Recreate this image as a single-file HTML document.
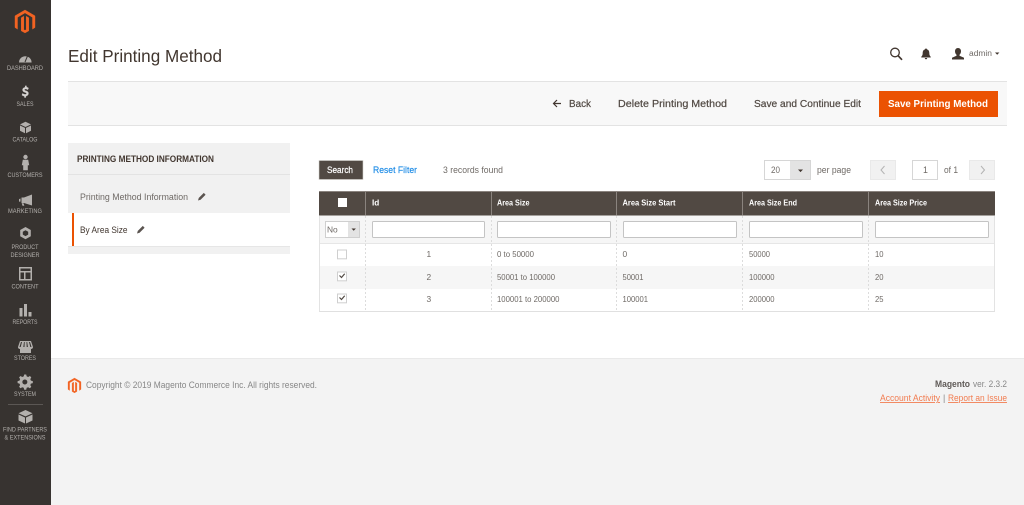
<!DOCTYPE html>
<html><head><meta charset="utf-8"><title>Edit Printing Method</title>
<style>
html,body{margin:0;padding:0;background:#fff;width:1024px;height:505px;overflow:hidden}
svg{display:block;filter:blur(.3px)}
text{font-family:"Liberation Sans",Arial,sans-serif}
.n text{font-size:6.2px;fill:#b3b0ad;text-anchor:middle}
.i{fill:#b3b0ad}
.r text{font-size:8.400px;fill:#6f6a66}
.h text{font-size:8.200px;fill:#fff;font-weight:bold}
.a text{font-size:10px;fill:#514943;stroke:#514943;stroke-width:.2}
.b{fill:#fff;stroke:#c4c4c4}
</style></head><body>
<svg width="1024" height="505" viewBox="0 0 1024 505" xmlns="http://www.w3.org/2000/svg">
<rect width="1024" height="505" fill="#fff"/>
<rect x="51" y="358" width="973" height="147" fill="#f3f3f3"/>
<rect x="51" y="358" width="973" height="1" fill="#e9e9e9"/>
<rect width="51" height="505" fill="#373330"/>

<!-- logo -->
<g transform="translate(15 10) scale(.8333)" fill="#f26322" stroke="#f26322" stroke-width=".5">
<path d="M12 0L24 7V21L21 23V8.800L12 3.500L3 8.800V23L0 21V7Z"/>
<path d="M10.500 7.500V23.500L12 24.500L13.500 23.500V7.500L16.500 9.300V25L12 27.500L7.500 25V9.300Z"/>
</g>

<!-- nav icons -->
<g class="i">
<path d="M19 62.500a6.300 6.300 0 1 1 12.600 0z"/><path d="M25 62l2.500-6" stroke="#373330" stroke-width="1"/>
<g transform="translate(25.500 92) scale(.68) translate(-25.500 -94)"><path d="M25.100 85v2.200c-2.400.3-3.900 1.700-3.900 3.600 0 4.300 5.900 3.100 5.900 5.300 0 1-1 1.500-2.200 1.500-1.400 0-2.600-.6-3.600-1.500l-1 2.500c1 .8 2.200 1.300 3.700 1.500v2h1.900v-2c2.500-.4 3.900-2 3.900-4 0-4.500-5.900-3.300-5.900-5.300 0-.9.800-1.300 1.900-1.300 1.100 0 2.200.4 3.100 1.100l1-2.400c-.9-.6-1.900-1-3-1.200V85z" fill="#d6d4d2" stroke="#d6d4d2" stroke-width=".6"/></g>
<path d="M25.500 121.800l5.500 2.600-5.500 2.600-5.500-2.600zM20 125.500l5 2.400v5.400l-5-2.500zM31 125.500l-5 2.400v5.400l5-2.500z"/>
<circle cx="25.500" cy="157" r="2.200"/><path d="M22.800 159.800h5.400l1 5.500h-1.400v5h-4.600v-5h-1.400z"/>
<path d="M21.500 197.500h2.500l8-3v11l-8-2.500h-2.500zM20.500 198.500v3l-1.500.3v-2.700z M23.500 203.200l.8 2.500h-1.800l-.8-2.500z"/>
<path d="M25.500 227l5.300 3v6.300l-5.300 3-5.300-3V230zM25.500 230.300l-2.700 1.500v2.800l2.700 1.500 2.700-1.500v-2.800z" fill-rule="evenodd"/>
<path d="M19 267h13v13.500H19zM20.500 268.500v2.500h10v-2.500zM20.500 272.500v6.500h3.500v-6.500zM25.500 272.500v6.500h5v-6.500z" fill-rule="evenodd"/>
<rect x="19.500" y="308" width="3" height="8.500"/><rect x="24" y="304" width="3" height="12.500"/><rect x="28.500" y="312" width="3" height="4.500"/>
<path d="M20 341h11l2 6c0 1.500-1.300 2-2 2v4H20V349c-.8 0-2-.5-2-2zM21 342l-1.500 5h1.200l1.300-5zM24 342l-.7 5h1.200l.2-5zM26.500 342l.2 5h1.200l-.7-5zM29 342l1.300 5h1.200l-1.500-5z" fill-rule="evenodd"/>
<path d="M25 374.500l1.200 0 .5 1.900 1.500.6 1.700-1 1.400 1.400-1 1.700.6 1.500 1.900.5v2l-1.900.5-.6 1.500 1 1.700-1.400 1.400-1.700-1-1.500.6-.5 1.900h-2l-.5-1.900-1.500-.6-1.700 1-1.400-1.400 1-1.700-.6-1.500-1.900-.5v-2l1.900-.5.600-1.500-1-1.700 1.400-1.400 1.700 1 1.500-.6.500-1.900zM24.800 379.500a2.500 2.500 0 1 0 .1 0z" fill-rule="evenodd"/>
<rect x="8" y="404" width="35" height="1" fill="#5b5754"/>
<path d="M25.500 410l7 3.200-7 3.200-7-3.200zM18.500 414.500l6.500 3v6l-6.500-3zM32.500 414.500l-6.500 3v6l6.500-3z"/>
</g>
<g class="n">
<text x="25" y="70" textLength="36" lengthAdjust="spacingAndGlyphs">DASHBOARD</text>
<text x="25" y="106" textLength="17" lengthAdjust="spacingAndGlyphs">SALES</text>
<text x="25" y="141.500" textLength="25" lengthAdjust="spacingAndGlyphs">CATALOG</text>
<text x="25" y="177" textLength="35" lengthAdjust="spacingAndGlyphs">CUSTOMERS</text>
<text x="25" y="213" textLength="34" lengthAdjust="spacingAndGlyphs">MARKETING</text>
<text x="25" y="249" textLength="27" lengthAdjust="spacingAndGlyphs">PRODUCT</text>
<text x="25" y="257" textLength="29" lengthAdjust="spacingAndGlyphs">DESIGNER</text>
<text x="25" y="288.500" textLength="27" lengthAdjust="spacingAndGlyphs">CONTENT</text>
<text x="25" y="324" textLength="25" lengthAdjust="spacingAndGlyphs">REPORTS</text>
<text x="25" y="360" textLength="22" lengthAdjust="spacingAndGlyphs">STORES</text>
<text x="25" y="396" textLength="22" lengthAdjust="spacingAndGlyphs">SYSTEM</text>
<text x="25" y="431.500" textLength="44" lengthAdjust="spacingAndGlyphs">FIND PARTNERS</text>
<text x="25" y="439.500" textLength="41" lengthAdjust="spacingAndGlyphs">&amp; EXTENSIONS</text>
</g>

<!-- page title -->
<text x="68" y="62" font-size="17.500" fill="#41362f" textLength="154" lengthAdjust="spacingAndGlyphs">Edit Printing Method</text>

<!-- header icons -->
<g fill="none" stroke="#41362f" stroke-width="1.300"><circle cx="895" cy="52.500" r="4.300"/><path d="M898.200 55.800L902 59.800" stroke-width="1.700"/></g>
<path d="M926 48.500c.6 0 1 .4 1 .9 1.700.5 2.300 2 2.300 3.500 0 2 .5 3 1.400 3.800v.8h-9.400v-.8c.9-.8 1.400-1.800 1.400-3.800 0-1.500.6-3 2.300-3.500 0-.5.400-.9 1-.9zM924.800 58h2.400c0 .8-.5 1.300-1.200 1.300s-1.200-.5-1.200-1.300z" fill="#41362f"/>
<path d="M958 48c2 0 3 1.500 3 3.300 0 1.600-.7 2.800-1.500 3.500v1l4.500 2V59.500h-12V57.800l4.500-2v-1c-.8-.7-1.500-1.900-1.500-3.500 0-1.800 1-3.300 3-3.300z" fill="#41362f"/>
<text x="969" y="56" font-size="8" fill="#6f6a66" textLength="23" lengthAdjust="spacingAndGlyphs">admin</text>
<path d="M995 52.500h4.400l-2.200 2.300z" fill="#41362f"/>

<!-- action bar -->
<rect x="68" y="81.500" width="939" height="44" fill="#f8f8f8"/>
<rect x="68" y="81" width="939" height="1" fill="#e3e3e3"/>
<rect x="68" y="125" width="939" height="1" fill="#e3e3e3"/>
<path d="M561 103.500h-7M557 100l-3.500 3.500 3.500 3.500" fill="none" stroke="#41362f" stroke-width="1.200"/>
<g class="a">
<text x="569" y="107" textLength="22" lengthAdjust="spacingAndGlyphs">Back</text>
<text x="618" y="107" textLength="109" lengthAdjust="spacingAndGlyphs">Delete Printing Method</text>
<text x="754" y="107" textLength="107" lengthAdjust="spacingAndGlyphs">Save and Continue Edit</text>
</g>
<rect x="879" y="91" width="119" height="26" fill="#eb5202"/>
<text x="888" y="107" font-size="10" font-weight="bold" fill="#fff" textLength="100" lengthAdjust="spacingAndGlyphs">Save Printing Method</text>

<!-- left panel -->
<rect x="68" y="143" width="222" height="111" fill="#f1f1f1"/>
<rect x="68" y="174" width="222" height="1" fill="#e3e3e3"/>
<text x="77" y="162" font-size="8.800" font-weight="bold" fill="#41362f" textLength="137" lengthAdjust="spacingAndGlyphs">PRINTING METHOD INFORMATION</text>
<text x="80" y="200" font-size="9" fill="#6f6a66" textLength="108" lengthAdjust="spacingAndGlyphs">Printing Method Information</text>
<path d="M198 200.500l.8-2.600 5-5 1.800 1.800-5 5z" fill="#5b5450"/>
<rect x="68" y="213" width="222" height="33" fill="#fff"/>
<rect x="72" y="213" width="2" height="33" fill="#eb5202"/>
<rect x="68" y="246" width="222" height="1" fill="#e6e6e6"/>
<text x="80" y="233" font-size="9" fill="#41362f" textLength="47.500" lengthAdjust="spacingAndGlyphs">By Area Size</text>
<path d="M137 233.500l.8-2.600 5-5 1.800 1.800-5 5z" fill="#5b5450"/>

<!-- grid toolbar -->
<rect x="319" y="160.500" width="44" height="19" fill="#514943" stroke="#d5d2cf" stroke-width=".6"/>
<text x="327" y="173" font-size="8.800" fill="#fff" stroke="#fff" stroke-width=".2" textLength="26" lengthAdjust="spacingAndGlyphs">Search</text>
<text x="373" y="173" font-size="8.800" fill="#1a8ae6" stroke="#1a8ae6" stroke-width=".15" textLength="44" lengthAdjust="spacingAndGlyphs">Reset Filter</text>
<text x="443" y="173" font-size="8.800" fill="#6f6a66" textLength="60" lengthAdjust="spacingAndGlyphs">3 records found</text>

<rect x="764.500" y="160.500" width="46" height="19" fill="#fff" stroke="#d6d6d6"/>
<rect x="790" y="161" width="20" height="18" fill="#e3e3e3"/>
<text x="771" y="173" font-size="8.800" fill="#6f6a66" textLength="9" lengthAdjust="spacingAndGlyphs">20</text>
<path d="M798 169.500h5l-2.500 2.600z" fill="#41362f"/>
<text x="817" y="173" font-size="8.800" fill="#6f6a66" textLength="34" lengthAdjust="spacingAndGlyphs">per page</text>
<rect x="870.500" y="160.500" width="25" height="19" fill="#f1f1f1" stroke="#e9e9e9"/>
<path d="M884.500 166l-3.500 4 3.500 4" fill="none" stroke="#b3b3b3"/>
<rect x="912.500" y="160.500" width="25" height="19" fill="#fff" stroke="#d6d6d6"/>
<text x="923" y="173" font-size="8.800" fill="#6f6a66">1</text>
<text x="944" y="173" font-size="8.800" fill="#6f6a66" textLength="14" lengthAdjust="spacingAndGlyphs">of 1</text>
<rect x="969.500" y="160.500" width="25" height="19" fill="#f1f1f1" stroke="#e9e9e9"/>
<path d="M981 166l3.500 4-3.500 4" fill="none" stroke="#b3b3b3"/>

<!-- table -->
<rect x="319" y="191" width="676" height="24.500" fill="#514943"/>
<rect x="319" y="191" width="676" height="1" fill="#8a837e"/>
<rect x="319" y="215.500" width="676" height="28" fill="#f6f6f6"/>
<rect x="319" y="266" width="676" height="23" fill="#f6f6f6"/>
<rect x="319" y="243" width="676" height="1" fill="#e6e6e6"/>
<rect x="319" y="311" width="676" height="1" fill="#e0e0e0"/>
<g stroke="#e3e3e3" fill="none">
<path d="M319.500 216V311M994.500 216V311"/>
</g>
<g stroke="#8a837e"><path d="M365.500 192V215M491.500 192V215M616.500 192V215M742.500 192V215M868.500 192V215"/></g>
<g stroke="#dcdcdc" stroke-dasharray="2 2"><path d="M365.500 216V311M491.500 216V311M616.500 216V311M742.500 216V311M868.500 216V311"/></g>

<rect x="338" y="198" width="9" height="9" fill="#fff"/>
<g class="h">
<text x="372" y="205.500">Id</text>
<text x="497" y="205.500" textLength="32.500" lengthAdjust="spacingAndGlyphs">Area Size</text>
<text x="622.500" y="205.500" textLength="53" lengthAdjust="spacingAndGlyphs">Area Size Start</text>
<text x="749" y="205.500" textLength="48" lengthAdjust="spacingAndGlyphs">Area Size End</text>
<text x="875" y="205.500" textLength="52" lengthAdjust="spacingAndGlyphs">Area Size Price</text>
</g>

<!-- filters -->
<rect x="325.500" y="221.500" width="34" height="16" fill="#fff" stroke="#cfcfcf"/>
<rect x="348" y="222" width="11" height="15" fill="#e3e3e3"/>
<path d="M351.500 228.500h4.400l-2.200 2.300z" fill="#41362f"/>
<text x="327" y="232.500" font-size="8.400" fill="#6f6a66">No</text>
<g class="b">
<rect x="372.500" y="221.500" width="112" height="16" rx="1"/>
<rect x="497.500" y="221.500" width="113" height="16" rx="1"/>
<rect x="623.500" y="221.500" width="113" height="16" rx="1"/>
<rect x="749.500" y="221.500" width="113" height="16" rx="1"/>
<rect x="875.500" y="221.500" width="113" height="16" rx="1"/>
</g>

<!-- rows -->
<g fill="#fff" stroke="#cfcfcf">
<rect x="337.500" y="250" width="9" height="8.800"/>
<rect x="337.500" y="272" width="9" height="8.800"/>
<rect x="337.500" y="294" width="9" height="8.800"/>
</g>
<g fill="none" stroke="#514943" stroke-width="1.200">
<path d="M339.500 275.500l2 2 3.200-3.800"/>
<path d="M339.500 297.500l2 2 3.200-3.800"/>
</g>
<g class="r">
<text x="426.500" y="257">1</text>
<text x="426.500" y="280">2</text>
<text x="426.500" y="302">3</text>
<text x="497" y="257" textLength="37" lengthAdjust="spacingAndGlyphs">0 to 50000</text>
<text x="497" y="280" textLength="58" lengthAdjust="spacingAndGlyphs">50001 to 100000</text>
<text x="497" y="302" textLength="62.500" lengthAdjust="spacingAndGlyphs">100001 to 200000</text>
<text x="622.500" y="257">0</text>
<text x="622.500" y="280" textLength="21" lengthAdjust="spacingAndGlyphs">50001</text>
<text x="622.500" y="302" textLength="25.500" lengthAdjust="spacingAndGlyphs">100001</text>
<text x="749" y="257" textLength="21" lengthAdjust="spacingAndGlyphs">50000</text>
<text x="749" y="280" textLength="25.500" lengthAdjust="spacingAndGlyphs">100000</text>
<text x="749" y="302" textLength="25.500" lengthAdjust="spacingAndGlyphs">200000</text>
<text x="875" y="257" textLength="8.500" lengthAdjust="spacingAndGlyphs">10</text>
<text x="875" y="280" textLength="8.500" lengthAdjust="spacingAndGlyphs">20</text>
<text x="875" y="302" textLength="8.500" lengthAdjust="spacingAndGlyphs">25</text>
</g>

<!-- footer -->
<g transform="translate(68 378) scale(.5417)" fill="#f26322" stroke="#f26322" stroke-width=".5">
<path d="M12 0L24 7V21L21 23V8.800L12 3.500L3 8.800V23L0 21V7Z"/>
<path d="M10.500 7.500V23.500L12 24.500L13.500 23.500V7.500L16.500 9.300V25L12 27.500L7.500 25V9.300Z"/>
</g>
<text x="86" y="388" font-size="8.800" fill="#878787" textLength="231" lengthAdjust="spacingAndGlyphs">Copyright © 2019 Magento Commerce Inc. All rights reserved.</text>
<text x="935" y="387" font-size="8.800" font-weight="bold" fill="#5f5a57" textLength="35" lengthAdjust="spacingAndGlyphs">Magento</text>
<text x="973" y="387" font-size="8.800" fill="#878787" textLength="34" lengthAdjust="spacingAndGlyphs">ver. 2.3.2</text>
<text x="880" y="401" font-size="8.800" fill="#f27c50" text-decoration="underline" textLength="60" lengthAdjust="spacingAndGlyphs">Account Activity</text>
<text x="943" y="401" font-size="8.800" fill="#878787">|</text>
<text x="948" y="401" font-size="8.800" fill="#f27c50" text-decoration="underline" textLength="59" lengthAdjust="spacingAndGlyphs">Report an Issue</text>
</svg>
</body></html>
